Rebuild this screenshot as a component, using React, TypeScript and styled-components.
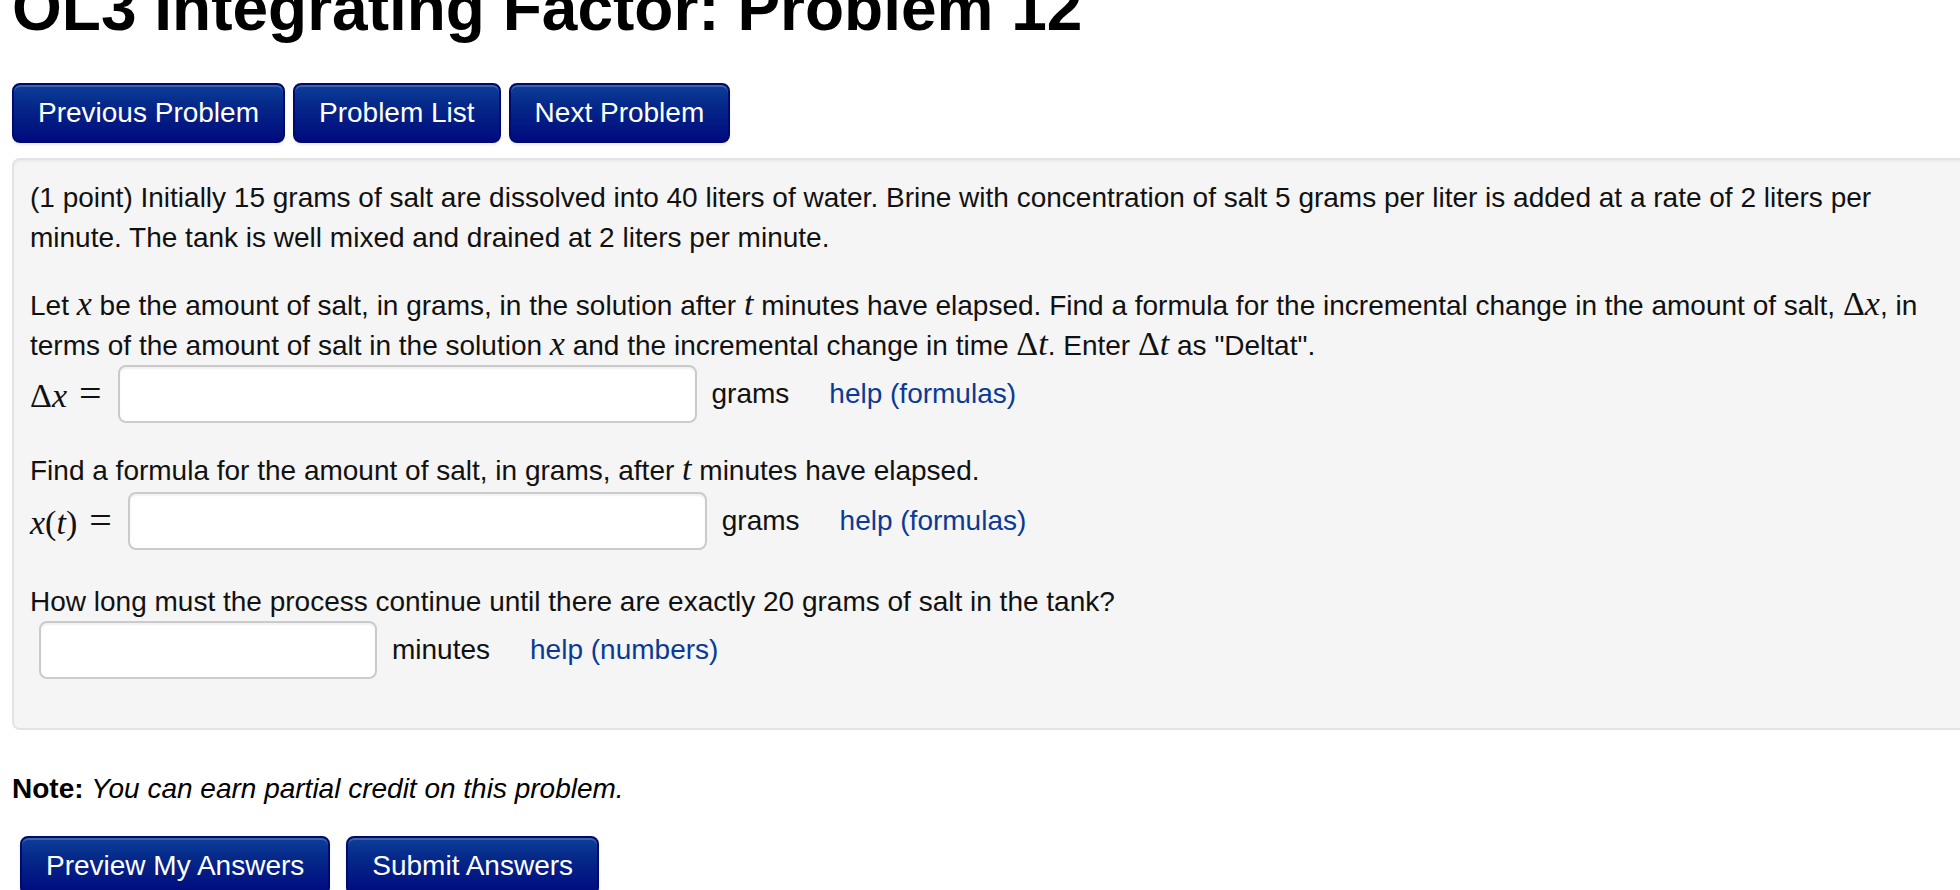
import React from "react";
import styled, { createGlobalStyle } from "styled-components";

const GlobalStyle = createGlobalStyle`
  html, body {
    margin: 0;
    padding: 0;
    background: #fff;
  }
  body {
    font-family: "Liberation Sans", Arial, Helvetica, sans-serif;
    font-size: 28px;
    line-height: 40px;
    color: #111;
  }
`;

const Page = styled.div`
  width: 100vw;
  overflow: hidden;
  padding: 0 0 40px 12px;
  box-sizing: border-box;
`;

const Title = styled.h1`
  margin: -27px 0 40px 0;
  font-size: 64px;
  line-height: 70px;
  font-weight: bold;
  color: #000;
  white-space: nowrap;
`;

const ButtonRow = styled.div<{ $indent?: number }>`
  display: flex;
  gap: ${(p) => (p.$indent ? 16 : 8)}px;
  margin-left: ${(p) => p.$indent || 0}px;
`;

const NavButton = styled.button`
  font-family: "Liberation Sans", Arial, Helvetica, sans-serif;
  font-size: 28px;
  line-height: 40px;
  color: #fff;
  padding: 8px 24px;
  border: 2px solid #000a6e;
  border-radius: 8px;
  background: linear-gradient(to bottom, #0d3f98 0%, #05298a 35%, #000a7e 100%);
  box-shadow: inset 0 2px 0 rgba(255, 255, 255, 0.2), 0 2px 3px rgba(0, 0, 0, 0.08);
  white-space: nowrap;
  cursor: pointer;
`;

const ProblemBox = styled.div`
  margin-top: 15px;
  width: 1966px;
  box-sizing: border-box;
  background: #f5f5f5;
  border: 2px solid #e3e3e3;
  border-radius: 8px;
  box-shadow: inset 0 2px 2px rgba(0, 0, 0, 0.04);
  padding: 18px 16px 49px 16px;
`;

const Para = styled.p<{ $top?: number }>`
  margin: ${(p) => p.$top || 0}px 0 0 0;
`;

const AnswerRow = styled.div<{ $pull?: number }>`
  display: flex;
  align-items: center;
  height: 59px;
  margin-top: ${(p) => -(p.$pull || 0)}px;
`;

const Math = styled.span`
  font-family: "Liberation Serif", "Times New Roman", serif;
  font-size: 34px;
  line-height: 1;
  white-space: nowrap;
`;

const Var = styled.i`
  font-family: "Liberation Serif", "Times New Roman", serif;
  font-style: italic;
  font-size: 34px;
  line-height: 1;
`;

const Eq = styled.span`
  margin-left: 12px;
  font-size: 40px;
`;

const AnswerInput = styled.input<{ $w: number; $gap: number }>`
  width: ${(p) => p.$w}px;
  height: 58px;
  box-sizing: border-box;
  margin-left: ${(p) => p.$gap}px;
  border: 2px solid #cbcbcb;
  border-radius: 8px;
  background: #fff;
  box-shadow: inset 0 2px 2px rgba(0, 0, 0, 0.06);
  font-size: 28px;
  padding: 0 10px;
  outline: none;
`;

const Unit = styled.span`
  margin-left: 15px;
`;

const HelpLink = styled.a`
  margin-left: 40px;
  color: #0b3a94;
  text-decoration: none;
`;

const Note = styled.p`
  margin: 39px 0 27px 0;
  color: #000;
`;

const Italic = styled.em`
  font-style: italic;
`;

export default function App() {
  return (
    <>
      <GlobalStyle />
      <Page>
        <Title>OL3 Integrating Factor: Problem 12</Title>
        <ButtonRow>
          <NavButton>Previous Problem</NavButton>
          <NavButton>Problem List</NavButton>
          <NavButton>Next Problem</NavButton>
        </ButtonRow>

        <ProblemBox>
          <Para>
            (1 point) Initially 15 grams of salt are dissolved into 40 liters of water. Brine with
            concentration of salt 5 grams per liter is added at a rate of 2 liters per minute. The
            tank is well mixed and drained at 2 liters per minute.
          </Para>

          <Para $top={28}>
            Let <Var>x</Var> be the amount of salt, in grams, in the solution after <Var>t</Var>{" "}
            minutes have elapsed. Find a formula for the incremental change in the amount of salt,{" "}
            <Math>
              Δ<Var>x</Var>
            </Math>
            , in terms of the amount of salt in the solution <Var>x</Var> and the incremental change
            in time{" "}
            <Math>
              Δ<Var>t</Var>
            </Math>
            . Enter{" "}
            <Math>
              Δ<Var>t</Var>
            </Math>{" "}
            as "Deltat".
          </Para>
          <AnswerRow $pull={2}>
            <Math>
              Δ<Var>x</Var>
              <Eq>=</Eq>
            </Math>
            <AnswerInput $w={579} $gap={16} />
            <Unit>grams</Unit>
            <HelpLink href="#">help (formulas)</HelpLink>
          </AnswerRow>

          <Para $top={28}>
            Find a formula for the amount of salt, in grams, after <Var>t</Var> minutes have elapsed.
          </Para>
          <AnswerRow>
            <Math>
              <Var>x</Var>(<Var>t</Var>)<Eq>=</Eq>
            </Math>
            <AnswerInput $w={579} $gap={16} />
            <Unit>grams</Unit>
            <HelpLink href="#">help (formulas)</HelpLink>
          </AnswerRow>

          <Para $top={32}>
            How long must the process continue until there are exactly 20 grams of salt in the tank?
          </Para>
          <AnswerRow $pull={2}>
            <AnswerInput $w={338} $gap={9} />
            <Unit>minutes</Unit>
            <HelpLink href="#">help (numbers)</HelpLink>
          </AnswerRow>
        </ProblemBox>

        <Note>
          <b>Note:</b> <Italic>You can earn partial credit on this problem.</Italic>
        </Note>

        <ButtonRow $indent={8}>
          <NavButton>Preview My Answers</NavButton>
          <NavButton>Submit Answers</NavButton>
        </ButtonRow>
      </Page>
    </>
  );
}
